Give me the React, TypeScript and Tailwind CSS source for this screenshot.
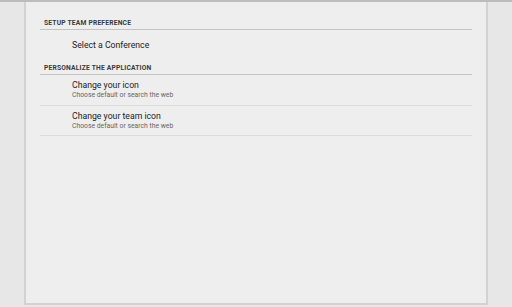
import React from "react";

const font = { fontFamily: "Roboto, 'Noto Sans', sans-serif" };

const Header = ({ title, top }: { title: string; top: string }) => (
  <div className={`${top} flex items-end border-b border-[#c4c4c4] pl-[4px] pb-[2px]`}>
    <span className="text-[6.7px] font-bold leading-[8px] tracking-[0.2px] text-[#3a3a3a]">
      {title}
    </span>
  </div>
);

const Item = ({ title, sub, h }: { title: string; sub?: string; h: string }) => (
  <div
    className={`flex flex-col justify-center pl-[32px] ${h} ${
      sub ? "border-b border-[#dcdcdc]" : ""
    }`}
  >
    <span className="text-[8.7px] leading-[10px] text-[#222]">{title}</span>
    {sub && (
      <span className="text-[6.8px] leading-[10px] text-[#666]">{sub}</span>
    )}
  </div>
);

const App = () => {
  return (
    <div
      className="w-[512px] h-[307px] bg-[#e7e7e7] border-t-2 border-[#bdbdbd] flex overflow-hidden"
      style={font}
    >
      <div className="ml-[24px] w-[464px] h-[303px] bg-[#eeeeee] border-x-2 border-b-2 border-[#d2d2d2] pl-[14px] pr-[14px]">
        <Header title="SETUP TEAM PREFERENCE" top="h-[28px]" />
        <Item title="Select a Conference" h="h-[29px]" />
        <Header title="PERSONALIZE THE APPLICATION" top="h-[16px]" />
        <Item title="Change your icon" sub="Choose default or search the web" h="h-[31px]" />
        <Item title="Change your team icon" sub="Choose default or search the web" h="h-[30px]" />
      </div>
    </div>
  );
};

export default App;
